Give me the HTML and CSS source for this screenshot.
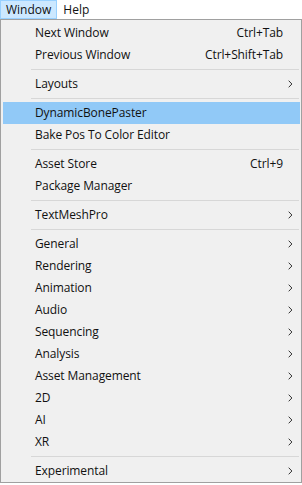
FILE: index.html
```html
<!DOCTYPE html>
<html>
<head>
<meta charset="utf-8">
<link rel="stylesheet" href="styles.css">
</head>
<body>
<div class="menubar">
  <span class="mb-item active">Window</span>
  <span class="mb-item">Help</span>
</div>
<div class="menu">
  <div class="item"><span class="label">Next Window</span><span class="shortcut">Ctrl+Tab</span><span class="sub"></span></div>
  <div class="item"><span class="label">Previous Window</span><span class="shortcut">Ctrl+Shift+Tab</span><span class="sub"></span></div>
  <div class="sep"></div>
  <div class="item"><span class="label">Layouts</span><span class="shortcut"></span><span class="sub"><svg class="arrow" viewBox="0 0 5 8" width="5" height="8"><path d="M0.7 0.7 L3.9 4 L0.7 7.3"/></svg></span></div>
  <div class="sep"></div>
  <div class="item hover"><span class="label">DynamicBonePaster</span><span class="shortcut"></span><span class="sub"></span></div>
  <div class="item"><span class="label">Bake Pos To Color Editor</span><span class="shortcut"></span><span class="sub"></span></div>
  <div class="sep"></div>
  <div class="item"><span class="label">Asset Store</span><span class="shortcut">Ctrl+9</span><span class="sub"></span></div>
  <div class="item"><span class="label">Package Manager</span><span class="shortcut"></span><span class="sub"></span></div>
  <div class="sep"></div>
  <div class="item"><span class="label">TextMeshPro</span><span class="shortcut"></span><span class="sub"><svg class="arrow" viewBox="0 0 5 8" width="5" height="8"><path d="M0.7 0.7 L3.9 4 L0.7 7.3"/></svg></span></div>
  <div class="sep"></div>
  <div class="item"><span class="label">General</span><span class="shortcut"></span><span class="sub"><svg class="arrow" viewBox="0 0 5 8" width="5" height="8"><path d="M0.7 0.7 L3.9 4 L0.7 7.3"/></svg></span></div>
  <div class="item"><span class="label">Rendering</span><span class="shortcut"></span><span class="sub"><svg class="arrow" viewBox="0 0 5 8" width="5" height="8"><path d="M0.7 0.7 L3.9 4 L0.7 7.3"/></svg></span></div>
  <div class="item"><span class="label">Animation</span><span class="shortcut"></span><span class="sub"><svg class="arrow" viewBox="0 0 5 8" width="5" height="8"><path d="M0.7 0.7 L3.9 4 L0.7 7.3"/></svg></span></div>
  <div class="item"><span class="label">Audio</span><span class="shortcut"></span><span class="sub"><svg class="arrow" viewBox="0 0 5 8" width="5" height="8"><path d="M0.7 0.7 L3.9 4 L0.7 7.3"/></svg></span></div>
  <div class="item"><span class="label">Sequencing</span><span class="shortcut"></span><span class="sub"><svg class="arrow" viewBox="0 0 5 8" width="5" height="8"><path d="M0.7 0.7 L3.9 4 L0.7 7.3"/></svg></span></div>
  <div class="item"><span class="label">Analysis</span><span class="shortcut"></span><span class="sub"><svg class="arrow" viewBox="0 0 5 8" width="5" height="8"><path d="M0.7 0.7 L3.9 4 L0.7 7.3"/></svg></span></div>
  <div class="item"><span class="label">Asset Management</span><span class="shortcut"></span><span class="sub"><svg class="arrow" viewBox="0 0 5 8" width="5" height="8"><path d="M0.7 0.7 L3.9 4 L0.7 7.3"/></svg></span></div>
  <div class="item"><span class="label">2D</span><span class="shortcut"></span><span class="sub"><svg class="arrow" viewBox="0 0 5 8" width="5" height="8"><path d="M0.7 0.7 L3.9 4 L0.7 7.3"/></svg></span></div>
  <div class="item"><span class="label">AI</span><span class="shortcut"></span><span class="sub"><svg class="arrow" viewBox="0 0 5 8" width="5" height="8"><path d="M0.7 0.7 L3.9 4 L0.7 7.3"/></svg></span></div>
  <div class="item"><span class="label">XR</span><span class="shortcut"></span><span class="sub"><svg class="arrow" viewBox="0 0 5 8" width="5" height="8"><path d="M0.7 0.7 L3.9 4 L0.7 7.3"/></svg></span></div>
  <div class="sep"></div>
  <div class="item"><span class="label">Experimental</span><span class="shortcut"></span><span class="sub"><svg class="arrow" viewBox="0 0 5 8" width="5" height="8"><path d="M0.7 0.7 L3.9 4 L0.7 7.3"/></svg></span></div>
</div>
</body>
</html>
```

FILE: styles.css
```css
html, body {
  margin: 0;
  padding: 0;
  background: #ffffff;
}
body {
  font-family: "Open Sans", "Noto Sans CJK KR", sans-serif;
  font-size: 12px;
  color: #111111;
  width: 302px;
  height: 485px;
  overflow: hidden;
}
.menubar {
  height: 19px;
  display: flex;
  align-items: stretch;
  background: #ffffff;
}
.mb-item {
  display: flex;
  align-items: center;
  padding: 0 5px;
  border: 1px solid transparent;
  line-height: 17px;
}
.mb-item.active {
  background: #cce8ff;
  border-color: #99d1ff;
}
.menu {
  width: 297px;
  border: 1px solid #a0a0a0;
  background: #f0f0f0;
  padding: 2px 1px 0 2px;
}
.item {
  display: grid;
  grid-template-columns: 1fr auto 17px;
  align-items: center;
  height: 22px;
  padding-left: 32px;
  line-height: 22px;
  letter-spacing: -0.1px;
}
.item.hover {
  background: #91c9f7;
}
.shortcut {
  text-align: right;
}
.sub {
  display: flex;
  align-items: center;
  padding-left: 5px;
}
.arrow {
  display: block;
  fill: none;
  stroke: #333333;
  stroke-width: 1;
}
.sep {
  height: 1px;
  background: #d7d7d7;
  margin: 3px 1px 3px 28px;
}
```
